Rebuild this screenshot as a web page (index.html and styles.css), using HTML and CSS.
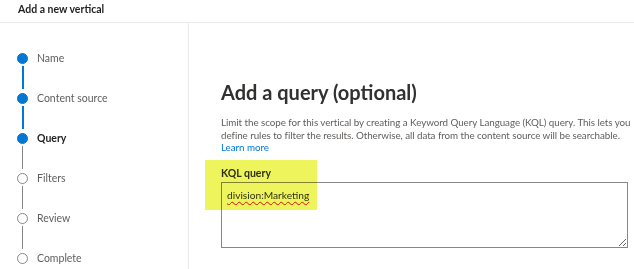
FILE: index.html
```html
<!DOCTYPE html>
<html lang="en">
<head>
    <meta charset="UTF-8">
    <meta name="viewport" content="width=device-width, initial-scale=1.0">
    <title>Add a new vertical</title>
    <link rel="stylesheet" href="styles.css">
</head>
<body>
    <div class="panel-header">Add a new vertical</div>

    <div class="wizard">
        <ul class="steps">
            <li class="step done">Name</li>
            <li class="step done">Content source</li>
            <li class="step current">Query</li>
            <li class="step">Filters</li>
            <li class="step">Review</li>
            <li class="step last">Complete</li>
        </ul>

        <div class="step-content">
            <h1>Add a query (optional)</h1>
            <p class="intro">
                Limit the scope for this vertical by creating a Keyword Query Language (KQL) query. This lets you<br>
                define rules to filter the results. Otherwise, all data from the content source will be searchable.<br>
                <a href="#">Learn more</a>
            </p>

            <div class="field">
                <label class="field-label">KQL query</label>
                <div class="kql-box"><span class="misspelled">division:Marketing</span></div>
                <div class="highlight"></div>
            </div>
        </div>
    </div>
</body>
</html>
```

FILE: styles.css
```css
body {
    margin: 0;
    font-family: "Segoe UI", Lato, sans-serif;
    color: #323130;
    background: #fff;
    overflow: hidden;
}
.panel-header {
    height: 23px;
    box-sizing: border-box;
    padding: 3px 0 0 18px;
    font-size: 10.5px;
    font-weight: 700;
    color: #201f1e;
    border-bottom: 1px solid #edebe9;
}
.wizard {
    display: grid;
    grid-template-columns: 189px 1fr;
    height: 246px;
}

/* left step list */
.steps {
    list-style: none;
    margin: 0;
    padding: 15px 0 0 0;
    border-right: 1px solid #edebe9;
}
.step {
    position: relative;
    height: 40px;
    display: flex;
    align-items: center;
    padding-left: 37px;
    font-size: 10.5px;
    color: #605e5c;
}
.step::before {
    content: "";
    position: absolute;
    left: 17px;
    top: 14.5px;
    width: 11px;
    height: 11px;
    box-sizing: border-box;
    border-radius: 50%;
    border: 1.5px solid #8a8886;
    background: #fff;
}
.step::after {
    content: "";
    position: absolute;
    left: 22px;
    top: 28px;
    width: 1px;
    height: 23px;
    background: #8a8886;
}
.step.last::after {
    display: none;
}
.step.done::before,
.step.current::before {
    background: #0078d4;
    border-color: #0078d4;
}
.step.done::after {
    background: #0078d4;
    width: 1.5px;
}
.step.current {
    font-weight: 700;
    color: #201f1e;
}

/* right content */
.step-content {
    padding: 56px 0 0 32px;
}
h1 {
    margin: 0;
    font-size: 20px;
    line-height: 26px;
    font-weight: 700;
    color: #323130;
}
.intro {
    margin: 11px 0 0 0;
    font-size: 9.8px;
    line-height: 12.5px;
    letter-spacing: -0.05px;
    color: #605e5c;
    white-space: nowrap;
}
.intro a {
    color: #0078d4;
    text-decoration: none;
}
.field {
    position: relative;
    margin-top: 12px;
    width: 407px;
}
.field-label {
    display: block;
    font-size: 10.5px;
    font-weight: 700;
    color: #323130;
    line-height: 14px;
    margin-bottom: 2px;
}
.kql-box {
    height: 66px;
    box-sizing: border-box;
    border: 1px solid #8a8886;
    padding: 5px 5px;
    font-size: 10.2px;
    line-height: 14px;
    color: #323130;
    overflow: auto;
    resize: both;
}
.misspelled {
    text-decoration: underline wavy #e81123;
    text-decoration-thickness: 0.7px;
    text-underline-offset: 2px;
}
.highlight {
    position: absolute;
    left: -16px;
    top: -6px;
    width: 112px;
    height: 50px;
    background: #eef55c;
    mix-blend-mode: multiply;
}
```
